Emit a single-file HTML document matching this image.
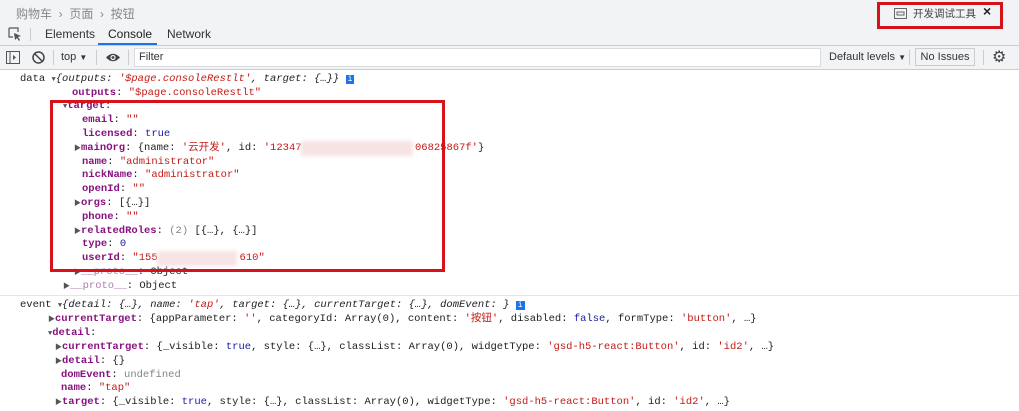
<!DOCTYPE html>
<html><head><meta charset="utf-8"><style>
body{margin:0;width:1019px;height:411px;overflow:hidden;background:#fff;font-family:"Liberation Sans","Noto Sans CJK SC",sans-serif;position:relative}
.a{position:absolute;white-space:pre}
.m{font-family:"Liberation Mono","Noto Sans CJK SC",monospace;font-size:10.5px;line-height:14px;color:#202124}
.k{color:#881280;font-weight:bold}
.kp{color:#b07cb0}
.s{color:#c41a16}
.b{color:#1a1aa6}
.g{color:#80868b}
.i{font-style:italic}
.tri{font-size:7px;color:#555}
.blur{position:absolute;background:#f6e3e3;filter:blur(2px)}
</style></head><body>
<div class="a" style="left:0;top:0;width:1019px;height:45px;background:#f1f3f4"></div>
<div class="a" style="left:0;top:45px;width:1019px;height:1px;background:#cbcdd1"></div>
<div class="a" style="left:0;top:46px;width:1019px;height:23px;background:#f1f3f4"></div>
<div class="a" style="left:0;top:69px;width:1019px;height:1px;background:#cbcdd1"></div>
<div class="a" style="left:16px;top:5px;font-size:12px;color:#888">购物车 &nbsp;›&nbsp; 页面 &nbsp;›&nbsp; 按钮</div>
<div class="a" style="left:877px;top:2px;width:120px;height:21px;border:3px solid #d8121b"></div>
<svg class="a" style="left:894px;top:8px" width="13" height="11"><rect x="0.5" y="0.5" width="12" height="10" fill="none" stroke="#666"/><rect x="3" y="4" width="7" height="3" fill="none" stroke="#666"/></svg>
<div class="a" style="left:913px;top:6px;font-size:10.5px;color:#444">开发调试工具</div>
<div class="a" style="left:983px;top:3px;font-size:14px;color:#222;font-weight:bold">×</div>
<svg class="a" style="left:8px;top:27px" width="14" height="14"><path d="M1 1h9v4M1 1v9h4" fill="none" stroke="#555" stroke-width="1.2"/><path d="M6 6l7 3-3 1 2 3-1 1-2-3-2 2z" fill="#555"/></svg>
<div class="a" style="left:30px;top:28px;width:1px;height:13px;background:#ccc"></div>
<div class="a" style="left:45px;top:27px;font-size:12px;color:#333">Elements</div>
<div class="a" style="left:108px;top:27px;font-size:12px;color:#202124">Console</div>
<div class="a" style="left:98px;top:43px;width:59px;height:2px;background:#1a73e8"></div>
<div class="a" style="left:167px;top:27px;font-size:12px;color:#333">Network</div>
<svg class="a" style="left:6px;top:51px" width="14" height="13"><rect x="0.5" y="0.5" width="13" height="12" fill="none" stroke="#555"/><line x1="4" y1="1" x2="4" y2="12" stroke="#555"/><path d="M7 4l3 2.5-3 2.5z" fill="#555"/></svg>
<svg class="a" style="left:32px;top:51px" width="13" height="13"><circle cx="6.5" cy="6.5" r="5.5" fill="none" stroke="#444" stroke-width="1.5"/><line x1="2.6" y1="2.6" x2="10.4" y2="10.4" stroke="#444" stroke-width="1.5"/></svg>
<div class="a" style="left:53px;top:50px;width:1px;height:15px;background:#ccc"></div>
<div class="a" style="left:61px;top:51px;font-size:11px;color:#333">top <span style="font-size:8px">▼</span></div>
<div class="a" style="left:96px;top:50px;width:1px;height:15px;background:#ccc"></div>
<svg class="a" style="left:105px;top:52px" width="16" height="11"><path d="M1 5.5Q8 -2 15 5.5Q8 13 1 5.5z" fill="#444"/><circle cx="8" cy="5.5" r="2.6" fill="#f1f3f4"/><circle cx="8" cy="5.5" r="1.4" fill="#444"/></svg>
<div class="a" style="left:128px;top:50px;width:1px;height:15px;background:#ccc"></div>
<div class="a" style="left:134px;top:48px;width:687px;height:19px;background:#fff;border:1px solid #dadce0;box-sizing:border-box"></div>
<div class="a" style="left:139px;top:51px;font-size:11px;color:#333">Filter</div>
<div class="a" style="left:829px;top:51px;font-size:11px;color:#333">Default levels <span style="font-size:8px">▼</span></div>
<div class="a" style="left:909px;top:50px;width:1px;height:15px;background:#ccc"></div>
<div class="a" style="left:915px;top:48px;width:60px;height:18px;border:1px solid #ccc;box-sizing:border-box;font-size:11px;color:#333;text-align:center;line-height:16px">No Issues</div>
<div class="a" style="left:983px;top:50px;width:1px;height:15px;background:#ccc"></div>
<div class="a" style="left:992px;top:47px;font-size:16px;color:#444">⚙</div>

<div class="a m" style="left:20px;top:72px">data <span class="tri">▼</span><span class="i">{outputs: <span class="s">'$page.consoleRestlt'</span>, target: {…}}</span> <span style="background:#1a73e8;color:#fff;font-size:8px;padding:0 2px">i</span></div>
<div class="a m" style="left:72px;top:86px"><span class="k">outputs</span>: <span class="s">"$page.consoleRestlt"</span></div>
<div class="a m" style="left:63px;top:99px"><span class="tri">▼</span><span class="k">target</span>:</div>
<div class="a m" style="left:82px;top:113px"><span class="k">email</span>: <span class="s">""</span></div>
<div class="a m" style="left:82px;top:127px"><span class="k">licensed</span>: <span class="b">true</span></div>
<div class="a m" style="left:74px;top:141px"><span class="tri">▶</span><span class="k">mainOrg</span>: {name: <span class="s">'云开发'</span>, id: <span class="s">'12347                  06825867f'</span>}</div>
<div class="blur" style="left:301px;top:141px;width:112px;height:15px"></div>
<div class="a m" style="left:82px;top:155px"><span class="k">name</span>: <span class="s">"administrator"</span></div>
<div class="a m" style="left:82px;top:168px"><span class="k">nickName</span>: <span class="s">"administrator"</span></div>
<div class="a m" style="left:82px;top:182px"><span class="k">openId</span>: <span class="s">""</span></div>
<div class="a m" style="left:74px;top:196px"><span class="tri">▶</span><span class="k">orgs</span>: [{…}]</div>
<div class="a m" style="left:82px;top:210px"><span class="k">phone</span>: <span class="s">""</span></div>
<div class="a m" style="left:74px;top:224px"><span class="tri">▶</span><span class="k">relatedRoles</span>: <span class="g">(2)</span> [{…}, {…}]</div>
<div class="a m" style="left:82px;top:237px"><span class="k">type</span>: <span class="b">0</span></div>
<div class="a m" style="left:82px;top:251px"><span class="k">userId</span>: <span class="s">"155             610"</span></div>
<div class="blur" style="left:157px;top:251px;width:80px;height:15px"></div>
<div class="a m" style="left:74px;top:265px"><span class="tri">▶</span><span class="kp">__proto__</span>: Object</div>
<div class="a m" style="left:63px;top:279px"><span class="tri">▶</span><span class="kp">__proto__</span>: Object</div>
<div class="a" style="left:50px;top:100px;width:389px;height:166px;border:3px solid #d8121b"></div>
<div class="a" style="left:0;top:295px;width:1019px;height:1px;background:#e6e6e6"></div>

<div class="a m" style="left:20px;top:298px">event <span class="tri">▼</span><span class="i">{detail: {…}, name: <span class="s">'tap'</span>, target: {…}, currentTarget: {…}, domEvent: }</span> <span style="background:#1a73e8;color:#fff;font-size:8px;padding:0 2px">i</span></div>
<div class="a m" style="left:48px;top:312px"><span class="tri">▶</span><span class="k">currentTarget</span>: {appParameter: <span class="s">''</span>, categoryId: Array(0), content: <span class="s">'按钮'</span>, disabled: <span class="b">false</span>, formType: <span class="s">'button'</span>, …}</div>
<div class="a m" style="left:48px;top:326px"><span class="tri">▼</span><span class="k">detail</span>:</div>
<div class="a m" style="left:55px;top:340px"><span class="tri">▶</span><span class="k">currentTarget</span>: {_visible: <span class="b">true</span>, style: {…}, classList: Array(0), widgetType: <span class="s">'gsd-h5-react:Button'</span>, id: <span class="s">'id2'</span>, …}</div>
<div class="a m" style="left:55px;top:354px"><span class="tri">▶</span><span class="k">detail</span>: {}</div>
<div class="a m" style="left:61px;top:368px"><span class="k">domEvent</span>: <span class="g">undefined</span></div>
<div class="a m" style="left:61px;top:381px"><span class="k">name</span>: <span class="s">"tap"</span></div>
<div class="a m" style="left:55px;top:395px"><span class="tri">▶</span><span class="k">target</span>: {_visible: <span class="b">true</span>, style: {…}, classList: Array(0), widgetType: <span class="s">'gsd-h5-react:Button'</span>, id: <span class="s">'id2'</span>, …}</div>
</body></html>
